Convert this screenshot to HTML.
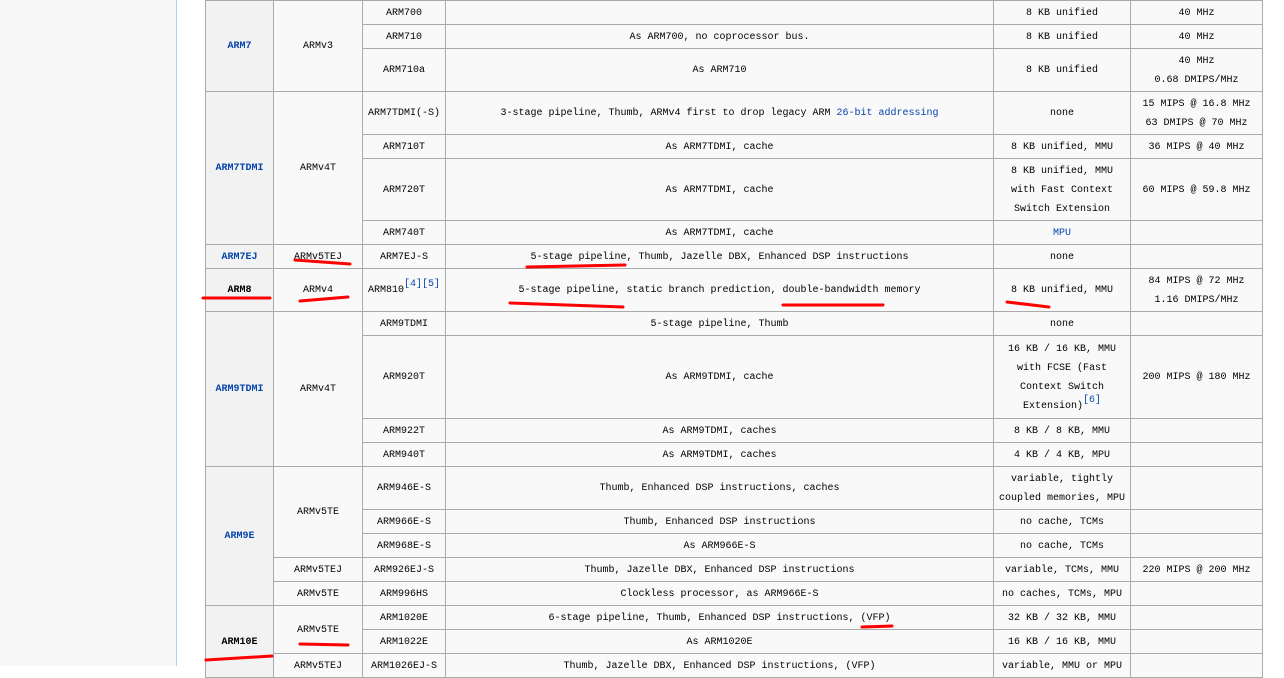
<!DOCTYPE html>
<html><head><meta charset="utf-8"><style>
body{margin:0;width:1284px;height:666px;overflow:hidden;background:#fff;position:relative;font-family:"Liberation Mono","Noto Sans CJK SC",monospace;font-size:10px;color:#000}
#side{position:absolute;left:0;top:0;width:176px;height:666px;background:#f6f6f6;border-right:1px solid #a7d7f9}
table{position:absolute;left:205px;top:0;width:1057px;border-collapse:collapse;table-layout:fixed;background:#f9f9f9}
td{border:1px solid #aaa;text-align:center;vertical-align:middle;padding:1px 2px 0;line-height:19px;overflow:hidden;white-space:nowrap}
td.h{background:#f2f2f2;font-weight:bold}
a{color:#0645ad;text-decoration:none}
sup{font-size:10px;vertical-align:6px;line-height:0}
svg{position:absolute;left:0;top:0}
</style></head><body>
<div id="side"></div>
<table>
<colgroup><col style="width:68px"><col style="width:89px"><col style="width:83px"><col style="width:548px"><col style="width:137px"><col style="width:132px"></colgroup>
<tr style="height:24px"><td class="h" rowspan="3"><a>ARM7</a></td><td rowspan="3">ARMv3</td><td>ARM700</td><td></td><td>8 KB unified</td><td>40 MHz</td></tr>
<tr style="height:24px"><td>ARM710</td><td>As ARM700, no coprocessor bus.</td><td>8 KB unified</td><td>40 MHz</td></tr>
<tr style="height:43px"><td>ARM710a</td><td>As ARM710</td><td>8 KB unified</td><td>40 MHz<br>0.68 DMIPS/MHz</td></tr>
<tr style="height:43px"><td class="h" rowspan="4"><a>ARM7TDMI</a></td><td rowspan="4">ARMv4T</td><td>ARM7TDMI(-S)</td><td>3-stage pipeline, Thumb, ARMv4 first to drop legacy ARM <a>26-bit addressing</a></td><td>none</td><td>15 MIPS @ 16.8 MHz<br>63 DMIPS @ 70 MHz</td></tr>
<tr style="height:24px"><td>ARM710T</td><td>As ARM7TDMI, cache</td><td>8 KB unified, MMU</td><td>36 MIPS @ 40 MHz</td></tr>
<tr style="height:62px"><td>ARM720T</td><td>As ARM7TDMI, cache</td><td>8 KB unified, MMU<br>with Fast Context<br>Switch Extension</td><td>60 MIPS @ 59.8 MHz</td></tr>
<tr style="height:24px"><td>ARM740T</td><td>As ARM7TDMI, cache</td><td><a>MPU</a></td><td></td></tr>
<tr style="height:24px"><td class="h"><a>ARM7EJ</a></td><td>ARMv5TEJ</td><td>ARM7EJ-S</td><td>5-stage pipeline, Thumb, Jazelle DBX, Enhanced DSP instructions</td><td>none</td><td></td></tr>
<tr style="height:43px"><td class="h">ARM8</td><td>ARMv4</td><td style="text-align:left;padding-left:5px">ARM810<sup><a>[4][5]</a></sup></td><td>5-stage pipeline, static branch prediction, double-bandwidth memory</td><td>8 KB unified, MMU</td><td>84 MIPS @ 72 MHz<br>1.16 DMIPS/MHz</td></tr>
<tr style="height:24px"><td class="h" rowspan="4"><a>ARM9TDMI</a></td><td rowspan="4">ARMv4T</td><td>ARM9TDMI</td><td>5-stage pipeline, Thumb</td><td>none</td><td></td></tr>
<tr style="height:83px"><td>ARM920T</td><td>As ARM9TDMI, cache</td><td>16 KB / 16 KB, MMU<br>with FCSE (Fast<br>Context Switch<br>Extension)<sup><a>[6]</a></sup></td><td>200 MIPS @ 180 MHz</td></tr>
<tr style="height:24px"><td>ARM922T</td><td>As ARM9TDMI, caches</td><td>8 KB / 8 KB, MMU</td><td></td></tr>
<tr style="height:24px"><td>ARM940T</td><td>As ARM9TDMI, caches</td><td>4 KB / 4 KB, MPU</td><td></td></tr>
<tr style="height:43px"><td class="h" rowspan="5"><a>ARM9E</a></td><td rowspan="3">ARMv5TE</td><td>ARM946E-S</td><td>Thumb, Enhanced DSP instructions, caches</td><td>variable, tightly<br>coupled memories, MPU</td><td></td></tr>
<tr style="height:24px"><td>ARM966E-S</td><td>Thumb, Enhanced DSP instructions</td><td>no cache, TCMs</td><td></td></tr>
<tr style="height:24px"><td>ARM968E-S</td><td>As ARM966E-S</td><td>no cache, TCMs</td><td></td></tr>
<tr style="height:24px"><td>ARMv5TEJ</td><td>ARM926EJ-S</td><td>Thumb, Jazelle DBX, Enhanced DSP instructions</td><td>variable, TCMs, MMU</td><td>220 MIPS @ 200 MHz</td></tr>
<tr style="height:24px"><td>ARMv5TE</td><td>ARM996HS</td><td>Clockless processor, as ARM966E-S</td><td>no caches, TCMs, MPU</td><td></td></tr>
<tr style="height:24px"><td class="h" rowspan="3">ARM10E</td><td rowspan="2">ARMv5TE</td><td>ARM1020E</td><td>6-stage pipeline, Thumb, Enhanced DSP instructions, (VFP)</td><td>32 KB / 32 KB, MMU</td><td></td></tr>
<tr style="height:24px"><td>ARM1022E</td><td>As ARM1020E</td><td>16 KB / 16 KB, MMU</td><td></td></tr>
<tr style="height:24px"><td>ARMv5TEJ</td><td>ARM1026EJ-S</td><td>Thumb, Jazelle DBX, Enhanced DSP instructions, (VFP)</td><td>variable, MMU or MPU</td><td></td></tr>
</table>
<svg width="1284" height="666" stroke="#f00" stroke-width="3" stroke-linecap="round" fill="none">
<path d="M295 260 L350 264"/><path d="M527 267 L625 265"/><path d="M203 298 L270 298"/><path d="M300 301 L348 297"/>
<path d="M510 303 L623 307"/><path d="M783 305 L883 305"/><path d="M1007 302 L1049 307"/>
<path d="M300 644 L348 645"/><path d="M862 627 L892 626"/><path d="M206 660 L272 656"/>
</svg>
</body></html>
